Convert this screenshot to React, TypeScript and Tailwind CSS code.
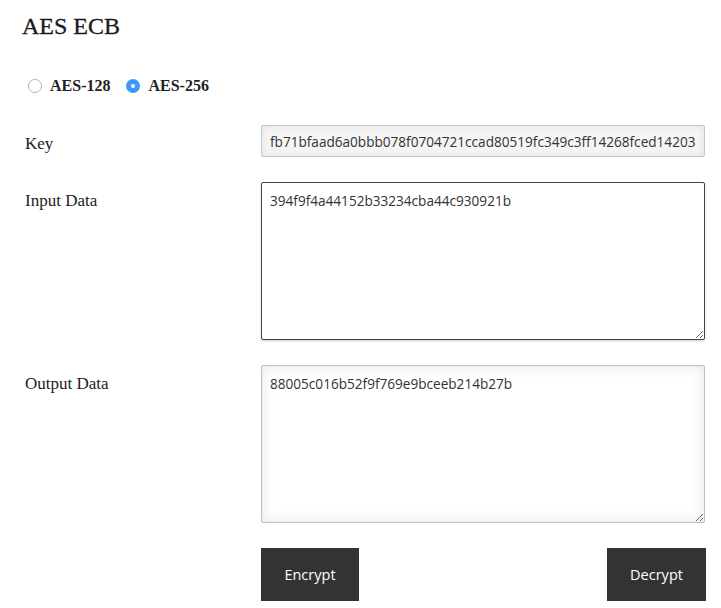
const KEY = "fb71bfaad6a0bbb078f0704721ccad80519fc349c3ff14268fced14203";
const INPUT = "394f9f4a44152b33234cba44c930921b";
const OUTPUT = "88005c016b52f9f769e9bceeb214b27b";

function Radio({ label, checked }: { label: string; checked?: boolean }) {
  return (
    <label className="flex items-center gap-[8px]">
      {checked ? (
        <span className="flex h-[14px] w-[14px] items-center justify-center rounded-full bg-[#3b99fc]">
          <span className="h-[4px] w-[4px] rounded-full bg-white" />
        </span>
      ) : (
        <span className="h-[14px] w-[14px] rounded-full border border-[#b5b5b5] bg-white" />
      )}
      <span className="font-bold text-[16px] text-[#222]">{label}</span>
    </label>
  );
}

function Row({ label, children }: { label: string; children: React.ReactNode }) {
  return (
    <div className="flex items-start">
      <div className="w-[239px] shrink-0 pl-[3px] pt-[9px] text-[17px] leading-[20px] text-[#222]">{label}</div>
      <div className="flex-1">{children}</div>
    </div>
  );
}

export default function App() {
  return (
    <div className="min-h-[608px] bg-white pl-[22px] pr-[16px] pt-[8px] font-['Liberation_Serif',serif]">
      <h1 className="text-[24px] leading-[36px] text-[#1a1a1a] [-webkit-text-stroke:0.3px_#1a1a1a]">AES ECB</h1>

      <div className="mt-[30px] flex items-center gap-[16px] pl-[6px]">
        <Radio label="AES-128" />
        <Radio label="AES-256" checked />
      </div>

      <div className="mt-[27px] flex flex-col gap-[25px]">
        <Row label="Key">
          <input
            readOnly
            value={KEY}
            className="block h-[32px] w-full rounded-[2px] border border-[#c8c8c8] bg-[#f5f5f5] px-[8px] font-['Open_Sans',sans-serif] text-[13.6px] text-[#333] shadow-[inset_0_0_8px_rgba(0,0,0,0.08)] outline-none"
          />
        </Row>
        <Row label="Input Data">
          <textarea
            readOnly
            value={INPUT}
            className="block h-[158px] w-full rounded-[2px] border border-[#444] bg-white px-[8px] py-[8px] font-['Open_Sans',sans-serif] text-[13.6px] text-[#333] shadow-[0_1px_2px_rgba(0,0,0,0.2)] outline-none"
          />
        </Row>
        <Row label="Output Data">
          <textarea
            readOnly
            value={OUTPUT}
            className="block h-[158px] w-full rounded-[2px] border border-[#bdbdbd] bg-white px-[8px] py-[8px] font-['Open_Sans',sans-serif] text-[13.6px] text-[#333] shadow-[inset_0_0_14px_rgba(0,0,0,0.1)] outline-none"
          />
        </Row>
        <div className="flex">
          <div className="w-[239px] shrink-0" />
          <div className="flex flex-1 justify-between">
            <button className="h-[53px] w-[98px] bg-[#333] font-['Open_Sans',sans-serif] text-[14.5px] font-medium text-white">
              Encrypt
            </button>
            <button className="mr-[-1px] h-[53px] w-[99px] bg-[#333] font-['Open_Sans',sans-serif] text-[14.5px] font-medium text-white">
              Decrypt
            </button>
          </div>
        </div>
      </div>
    </div>
  );
}
